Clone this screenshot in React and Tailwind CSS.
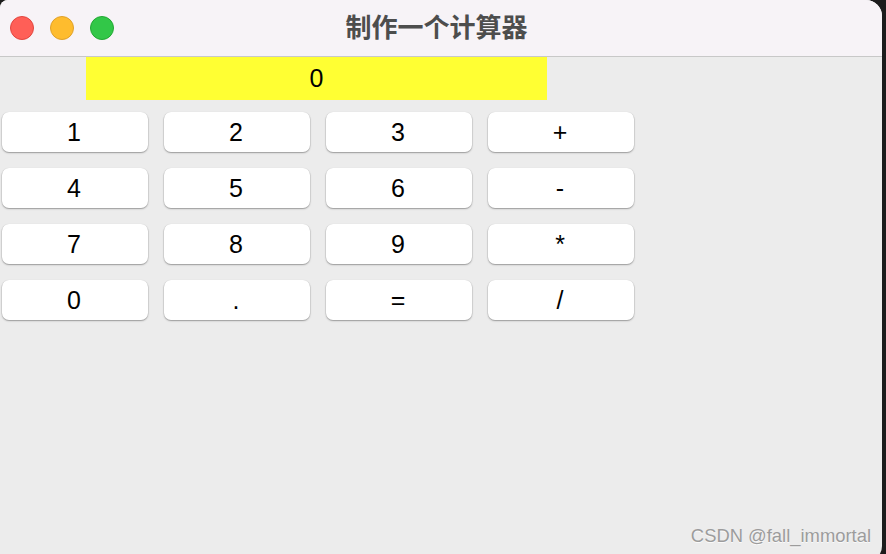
import React from 'react';

const keys = ['1', '2', '3', '+', '4', '5', '6', '-', '7', '8', '9', '*', '0', '.', '=', '/'];

function TrafficLight({ color }) {
    return <div className={`w-[24px] h-[24px] rounded-full border ${color}`}></div>;
}

export default function App() {
    return (
        <div className="w-[886px] h-[554px] bg-[#1c1c1c] overflow-hidden">
            <div className="relative w-[882px] h-[562px] bg-[#ececec] rounded-tl-[8px] rounded-tr-[16px] rounded-br-[16px] overflow-hidden flex flex-col">
                {/* Title bar */}
                <div className="h-[57px] shrink-0 bg-[#f7f3f7] border-b border-[#c8c8c8] flex items-center relative">
                    <div className="absolute left-[10px] top-[16px] flex gap-[16px]">
                        <TrafficLight color="bg-[#ff5f57] border-[#e2463f]" />
                        <TrafficLight color="bg-[#febc2e] border-[#e0a12a]" />
                        <TrafficLight color="bg-[#32c748] border-[#22a833]" />
                    </div>
                    <div
                        className="flex-1 text-center pr-[9px] pb-[4px] text-[26px] font-bold text-[#4d4d4d] leading-none"
                        style={{ fontFamily: '"Noto Sans CJK SC", "Noto Sans", sans-serif' }}
                    >
                        制作一个计算器
                    </div>
                </div>

                {/* Display */}
                <div
                    className="ml-[86px] w-[461px] h-[43px] shrink-0 bg-[#ffff33] flex items-center justify-center text-[25px] text-black"
                    style={{ fontFamily: '"Liberation Sans", Arial, sans-serif' }}
                >
                    0
                </div>

                {/* Keys */}
                <div
                    className="mt-[12px] pl-[2px] grid grid-cols-[repeat(4,146px)] auto-rows-[40px] gap-[16px]"
                    style={{ fontFamily: '"Liberation Sans", Arial, sans-serif' }}
                >
                    {keys.map((k) => (
                        <button
                            key={k}
                            className="bg-white rounded-[7px] shadow-[0_0.5px_0_0.5px_rgba(0,0,0,0.12),0_1px_2px_rgba(0,0,0,0.25)] text-[25px] text-black flex items-center justify-center leading-none pr-[2px]"
                        >
                            {k}
                        </button>
                    ))}
                </div>

                {/* Watermark */}
                <div
                    className="absolute right-[11px] top-[522px] text-[18.4px] text-[#9c9c9c] [text-shadow:0_1px_0_rgba(255,255,255,0.8)]"
                    style={{ fontFamily: '"Liberation Sans", Arial, sans-serif' }}
                >
                    CSDN @fall_immortal
                </div>
            </div>
        </div>
    );
}
